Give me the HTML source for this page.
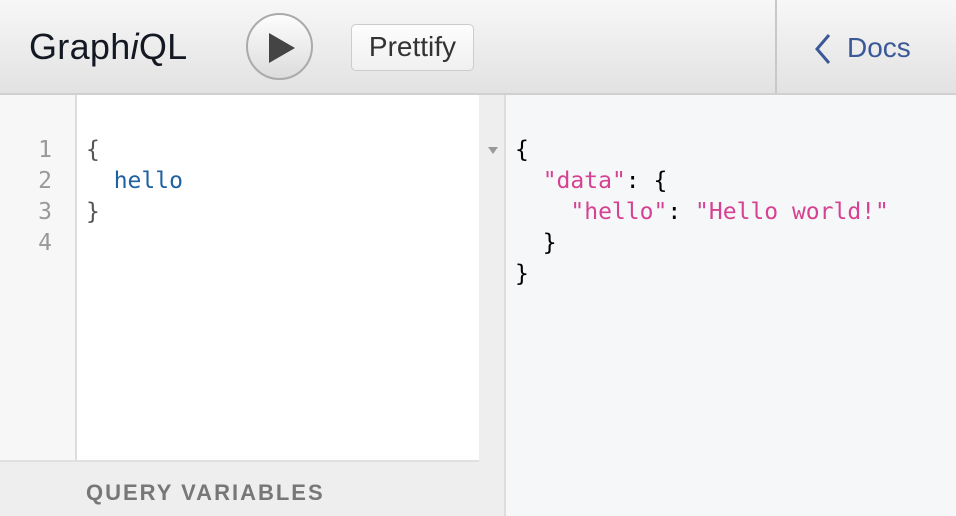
<!DOCTYPE html>
<html><head><style>
*{margin:0;padding:0;box-sizing:border-box}
body{width:956px;height:516px;overflow:hidden;position:relative;font-family:"Liberation Sans",sans-serif;background:#f6f7f9}
.tb{position:absolute;left:0;top:0;width:956px;height:95px;background:linear-gradient(#f7f7f7,#e2e2e2);border-bottom:2px solid #d0d0d0}
.title{position:absolute;left:29px;top:26px;font-size:36px;color:#141823;letter-spacing:0.3px}
.play{position:absolute;left:246px;top:13px;width:67px;height:67px;border-radius:50%;border:2px solid #aaa;background:linear-gradient(#fdfdfd,#dcdcdc)}
.pret{position:absolute;left:351px;top:24px;width:123px;height:47px;border:1px solid #ccc;border-radius:5px;background:linear-gradient(#fdfdfd,#f0f0f0);font-size:28px;color:#333;text-align:center;line-height:44px}
.sep{position:absolute;left:775px;top:0;width:2px;height:93px;background:#c8c8c8}
.docs{position:absolute;left:847px;top:32px;font-size:28px;color:#3B5998}
.gut{position:absolute;left:0;top:95px;width:77px;height:366px;background:#f7f7f7;border-right:2px solid #ddd}
.ed{position:absolute;left:77px;top:95px;width:402px;height:366px;background:#fff}
.mono{font-family:"DejaVu Sans Mono",monospace;font-size:23px;line-height:31px}
.nums{position:absolute;left:0;top:135px;width:52px;text-align:right;color:#999}
.code{position:absolute;left:86px;top:135px;color:#555}
.rg{position:absolute;left:479px;top:95px;width:27px;height:421px;background:#eee;border-right:2px solid #ddd}
.res{position:absolute;left:515px;top:135px;color:#000}
.qv{position:absolute;left:0;top:460px;width:479px;height:56px;background:#eee;border-top:2px solid #e0e0e0;font-size:22px;font-weight:bold;color:#777;letter-spacing:2px;padding:18px 0 0 86px}
.pk{color:#D64292}
</style></head><body>
<div class="tb">
<div class="title">Graph<i>i</i>QL</div>
<div class="play"><svg width="63" height="63" style="position:absolute;left:0;top:0"><polygon points="21,18 21,48 47,33" fill="#444"/></svg></div>
<div class="pret">Prettify</div>
<div class="sep"></div>
<svg width="20" height="34" style="position:absolute;left:812px;top:33px"><polyline points="17,2 5,16 17,30" fill="none" stroke="#3B5998" stroke-width="3"/></svg>
<div class="docs">Docs</div>
</div>
<div class="gut"></div>
<div class="ed"></div>
<div class="mono nums">1<br>2<br>3<br>4</div>
<div class="mono code">{<br>&nbsp;&nbsp;<span style="color:#1F61A0">hello</span><br>}</div>
<div class="rg"><div style="position:absolute;left:9px;top:52px;width:0;height:0;border-left:5px solid transparent;border-right:5px solid transparent;border-top:7px solid #999"></div></div>
<div class="mono res">{<br>&nbsp;&nbsp;<span class="pk">"data"</span>: {<br>&nbsp;&nbsp;&nbsp;&nbsp;<span class="pk">"hello"</span>: <span class="pk">"Hello world!"</span><br>&nbsp;&nbsp;}<br>}</div>
<div class="qv">QUERY VARIABLES</div>
</body></html>
